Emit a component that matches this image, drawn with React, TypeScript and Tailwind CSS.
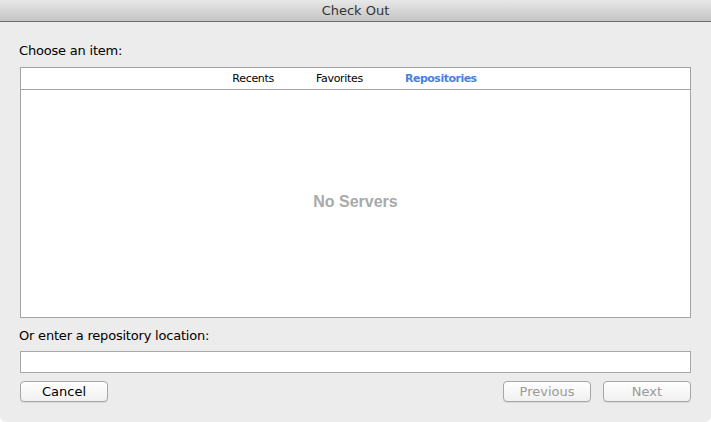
import React from 'react';

const tabs = ['Recents', 'Favorites', 'Repositories'];

const MacButton: React.FC<{ label: string; disabled?: boolean; className?: string }> = ({ label, disabled, className }) => (
    <button
        type="button"
        disabled={disabled}
        className={`h-[21px] w-[88px] rounded-[4px] border border-[#a6a6a6] bg-gradient-to-b from-white to-[#f0f0f0] text-[13px] leading-none shadow-[0_1px_0_rgba(0,0,0,0.08)] ${disabled ? 'text-[#9a9a9a]' : 'text-black'} ${className ?? ''}`}
    >
        {label}
    </button>
);

export default function App() {
    return (
        <div className="w-[711px] h-[422px] bg-white" style={{ fontFamily: '"DejaVu Sans", "Liberation Sans", sans-serif' }}>
            <div className="w-full h-full flex flex-col bg-[#ececec] rounded-b-[6px] overflow-hidden">
                {/* title bar */}
                <div className="h-[22px] shrink-0 flex items-center justify-center bg-gradient-to-b from-[#e8e8e8] to-[#c4c4c4] border-b border-[#6b6b6b]">
                    <span className="text-[13px] text-[#333] leading-none">Check Out</span>
                </div>

                <div className="flex-1 flex flex-col px-[20px]">
                    <div className="mt-[22px] text-[13px] text-black leading-none -ml-[1px] tracking-[-0.2px]">Choose an item:</div>

                    {/* browser box */}
                    <div className="mt-[10px] h-[251px] flex flex-col bg-white border border-[#a3a3a3]">
                        <div className="h-[22px] shrink-0 flex items-center justify-center gap-[42px] border-b border-[#a3a3a3] pr-[2px] text-[11px] leading-none">
                            {tabs.map((t) => (
                                <span
                                    key={t}
                                    className={t === 'Repositories' ? 'text-[#4a7fd9] font-semibold tracking-[-0.5px]' : 'text-black tracking-[-0.3px]'}
                                >
                                    {t}
                                </span>
                            ))}
                        </div>
                        <div className="flex-1 flex items-center justify-center pb-[4px]">
                            <span
                                className="text-[16px] font-bold text-[#a9a9a9]"
                                style={{ fontFamily: '"Liberation Sans", Arial, sans-serif' }}
                            >
                                No Servers
                            </span>
                        </div>
                    </div>

                    <div className="mt-[11px] text-[13px] text-black leading-none -ml-[1px] tracking-[-0.2px]">Or enter a repository location:</div>

                    <div className="mt-[9px] h-[22px] bg-white border border-[#a8a8a8]" />

                    <div className="mt-[8px] flex items-center">
                        <MacButton label="Cancel" />
                        <div className="flex-1" />
                        <MacButton label="Previous" disabled />
                        <MacButton label="Next" disabled className="ml-[12px]" />
                    </div>
                </div>
            </div>
        </div>
    );
}
